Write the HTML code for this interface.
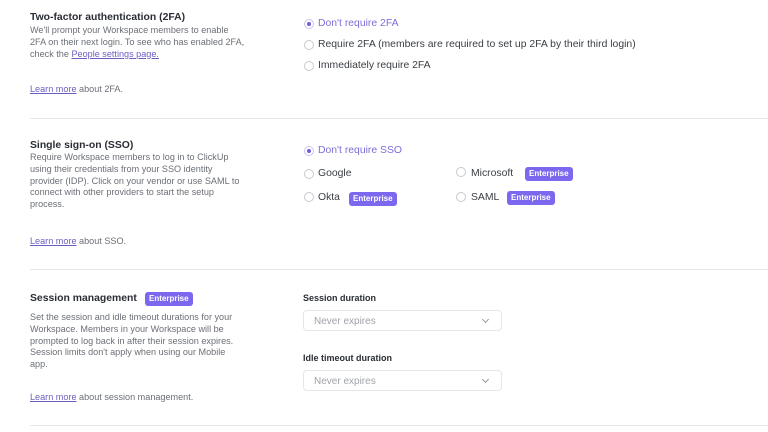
<!DOCTYPE html><html><head><style>
body{margin:0;width:768px;height:432px;background:#fff;font-family:"Liberation Sans",sans-serif;position:relative;overflow:hidden;color:#2a2e34}
.a{position:absolute;white-space:nowrap}
.t{font-size:10.4px;font-weight:bold;color:#2a2e34}
.b{font-size:9.1px;color:#6b6f76;line-height:11.8px}
.l{color:#6a5fc1;text-decoration:underline}
.hr{position:absolute;left:30px;right:0;height:1px;background:#e8e8ec}
.r{font-size:10.4px;color:#3a3e44}
.c{position:absolute;width:8px;height:8px;border:1px solid #c8c8d0;border-radius:50%;background:#fff}
.c.on{border-color:#c9c4f3}.c.on:after{content:"";position:absolute;left:2px;top:2px;width:4px;height:4px;border-radius:50%;background:#6d5ee0}
.bd{position:absolute;background:#7b68ee;color:#fff;font-size:8px;font-weight:bold;padding:0 4px;height:14px;line-height:14px;border-radius:3px}
.sel{position:absolute;left:303px;width:199px;height:21px;border:1px solid #e6e6ea;border-radius:4px;font-size:10px;color:#a0a3aa;line-height:21px;box-sizing:border-box;padding-left:10px}
.sel:after{content:"";position:absolute;right:13px;top:6px;width:4px;height:4px;border-right:1px solid #999;border-bottom:1px solid #999;transform:rotate(45deg)}
</style></head><body>
<div class="a t" style="left:30px;top:12px">Two-factor authentication (2FA)</div>
<div class="a b" style="left:30px;top:25px">We'll prompt your Workspace members to enable<br>2FA on their next login. To see who has enabled 2FA,<br>check the <span class="l">People settings page.</span></div>
<div class="a b" style="left:30px;top:84px"><span class="l">Learn more</span> about 2FA.</div>
<div class="c on" style="left:304px;top:19px"></div><div class="a r" style="left:318px;top:18px;color:#7b6fd6">Don't require 2FA</div>
<div class="c" style="left:304px;top:40px"></div><div class="a r" style="left:318px;top:39px">Require 2FA (members are required to set up 2FA by their third login)</div>
<div class="c" style="left:304px;top:61px"></div><div class="a r" style="left:318px;top:60px">Immediately require 2FA</div>
<div class="hr" style="top:118px"></div>

<div class="a t" style="left:30px;top:140px">Single sign-on (SSO)</div>
<div class="a b" style="left:30px;top:152px">Require Workspace members to log in to ClickUp<br>using their credentials from your SSO identity<br>provider (IDP). Click on your vendor or use SAML to<br>connect with other providers to start the setup<br>process.</div>
<div class="a b" style="left:30px;top:236px"><span class="l">Learn more</span> about SSO.</div>
<div class="c on" style="left:304px;top:146px"></div><div class="a r" style="left:318px;top:145px;color:#7b6fd6">Don't require SSO</div>
<div class="c" style="left:304px;top:169px"></div><div class="a r" style="left:318px;top:168px">Google</div>
<div class="c" style="left:304px;top:192px"></div><div class="a r" style="left:318px;top:192px">Okta</div><div class="bd" style="left:349px;top:192px">Enterprise</div>
<div class="c" style="left:456px;top:167px"></div><div class="a r" style="left:471px;top:168px">Microsoft</div><div class="bd" style="left:525px;top:167px">Enterprise</div>
<div class="c" style="left:456px;top:192px"></div><div class="a r" style="left:471px;top:192px">SAML</div><div class="bd" style="left:507px;top:191px">Enterprise</div>
<div class="hr" style="top:269px"></div>

<div class="a t" style="left:30px;top:293px">Session management</div><div class="bd" style="left:145px;top:292px">Enterprise</div>
<div class="a b" style="left:30px;top:312px">Set the session and idle timeout durations for your<br>Workspace. Members in your Workspace will be<br>prompted to log back in after their session expires.<br>Session limits don't apply when using our Mobile<br>app.</div>
<div class="a b" style="left:30px;top:392px"><span class="l">Learn more</span> about session management.</div>
<div class="a" style="left:303px;top:293px;font-size:9px;font-weight:bold">Session duration</div>
<div class="sel" style="top:310px">Never expires</div>
<div class="a" style="left:303px;top:353px;font-size:9px;font-weight:bold">Idle timeout duration</div>
<div class="sel" style="top:370px">Never expires</div>
<div class="hr" style="top:425px"></div>
</body></html>
